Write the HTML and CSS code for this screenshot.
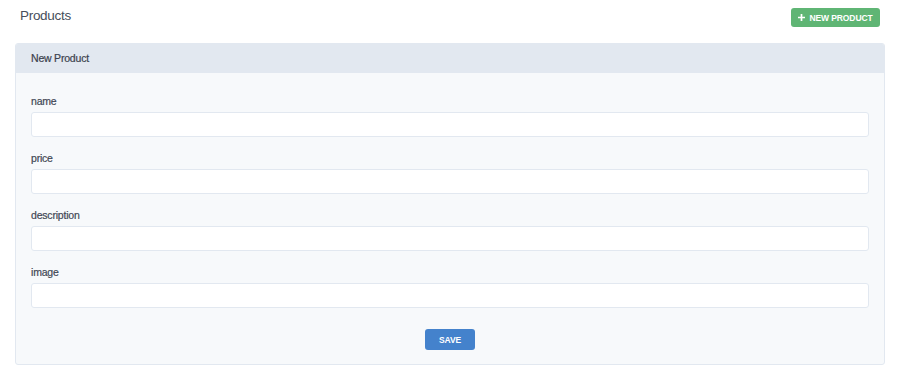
FILE: index.html
```html
<!DOCTYPE html>
<html lang="en">
<head>
    <meta charset="UTF-8">
    <meta name="viewport" content="width=device-width, initial-scale=1.0">
    <title>Products</title>
    <link rel="stylesheet" href="styles.css">
</head>
<body>
    <div class="page-head">
        <h1 class="page-title">Products</h1>
        <button class="btn btn-green">
            <svg class="plus" width="7" height="7" viewBox="0 0 7 7"><path d="M3.5 0v7M0 3.5h7" stroke="#fff" stroke-width="1.7"/></svg>
            New Product
        </button>
    </div>

    <div class="card">
        <div class="card-header">New Product</div>
        <form class="card-body">
            <div class="field">
                <label for="name">name</label>
                <input id="name" type="text">
            </div>
            <div class="field">
                <label for="price">price</label>
                <input id="price" type="text">
            </div>
            <div class="field">
                <label for="description">description</label>
                <input id="description" type="text">
            </div>
            <div class="field">
                <label for="image">image</label>
                <input id="image" type="text">
            </div>
            <div class="actions">
                <button type="button" class="btn btn-blue">Save</button>
            </div>
        </form>
    </div>
</body>
</html>
```

FILE: styles.css
```css
/* base */
body {
    margin: 0;
    background: #fff;
    color: #4a5568;
    font-family: 'Liberation Sans', Arial, sans-serif;
}

/* header row */
.page-head {
    display: flex;
    justify-content: space-between;
    align-items: flex-start;
    padding: 6px 20px 0;
}
.page-title {
    margin: 0;
    font-size: 13.5px;
    line-height: 20px;
    font-weight: 400;
    letter-spacing: -0.3px;
    color: #464e5b;
}

/* buttons */
.btn {
    border: none;
    border-radius: 3px;
    color: #fff;
    font-family: inherit;
    font-size: 8.5px;
    font-weight: 700;
    letter-spacing: -0.1px;
    text-transform: uppercase;
    cursor: pointer;
    display: flex;
    align-items: center;
    justify-content: center;
}
.btn-green {
    background: #5fb574;
    height: 19px;
    width: 89px;
    margin-top: 2px;
    padding: 0;
    gap: 4px;
}
.btn-blue {
    background: #4482cc;
    height: 21px;
    width: 50px;
    padding: 0;
}

/* card */
.card {
    margin: 16px 15px 0;
    border: 1px solid #e2e8f0;
    border-radius: 3px;
    background: #f7f9fb;
    overflow: hidden;
}
.card-header {
    background: #e2e8f0;
    height: 29px;
    line-height: 29px;
    padding: 0 15px;
    font-size: 10.5px;
    letter-spacing: -0.2px;
    color: #3a414d;
    -webkit-text-stroke: 0.2px #3a414d;
}
.card-body {
    padding: 21px 15px 14px;
}

/* fields */
.field {
    display: flex;
    flex-direction: column;
    margin-bottom: 14px;
}
.field label {
    font-size: 10.5px;
    line-height: 14px;
    letter-spacing: -0.2px;
    margin-bottom: 4px;
    color: #3f4754;
    -webkit-text-stroke: 0.2px #3f4754;
}
.field input {
    height: 25px;
    box-sizing: border-box;
    border: 1px solid #e2e8f0;
    border-radius: 3px;
    background: #fff;
    font-family: inherit;
    font-size: 11px;
    padding: 0 8px;
}

.actions {
    display: flex;
    justify-content: center;
    margin-top: 21px;
}
```
